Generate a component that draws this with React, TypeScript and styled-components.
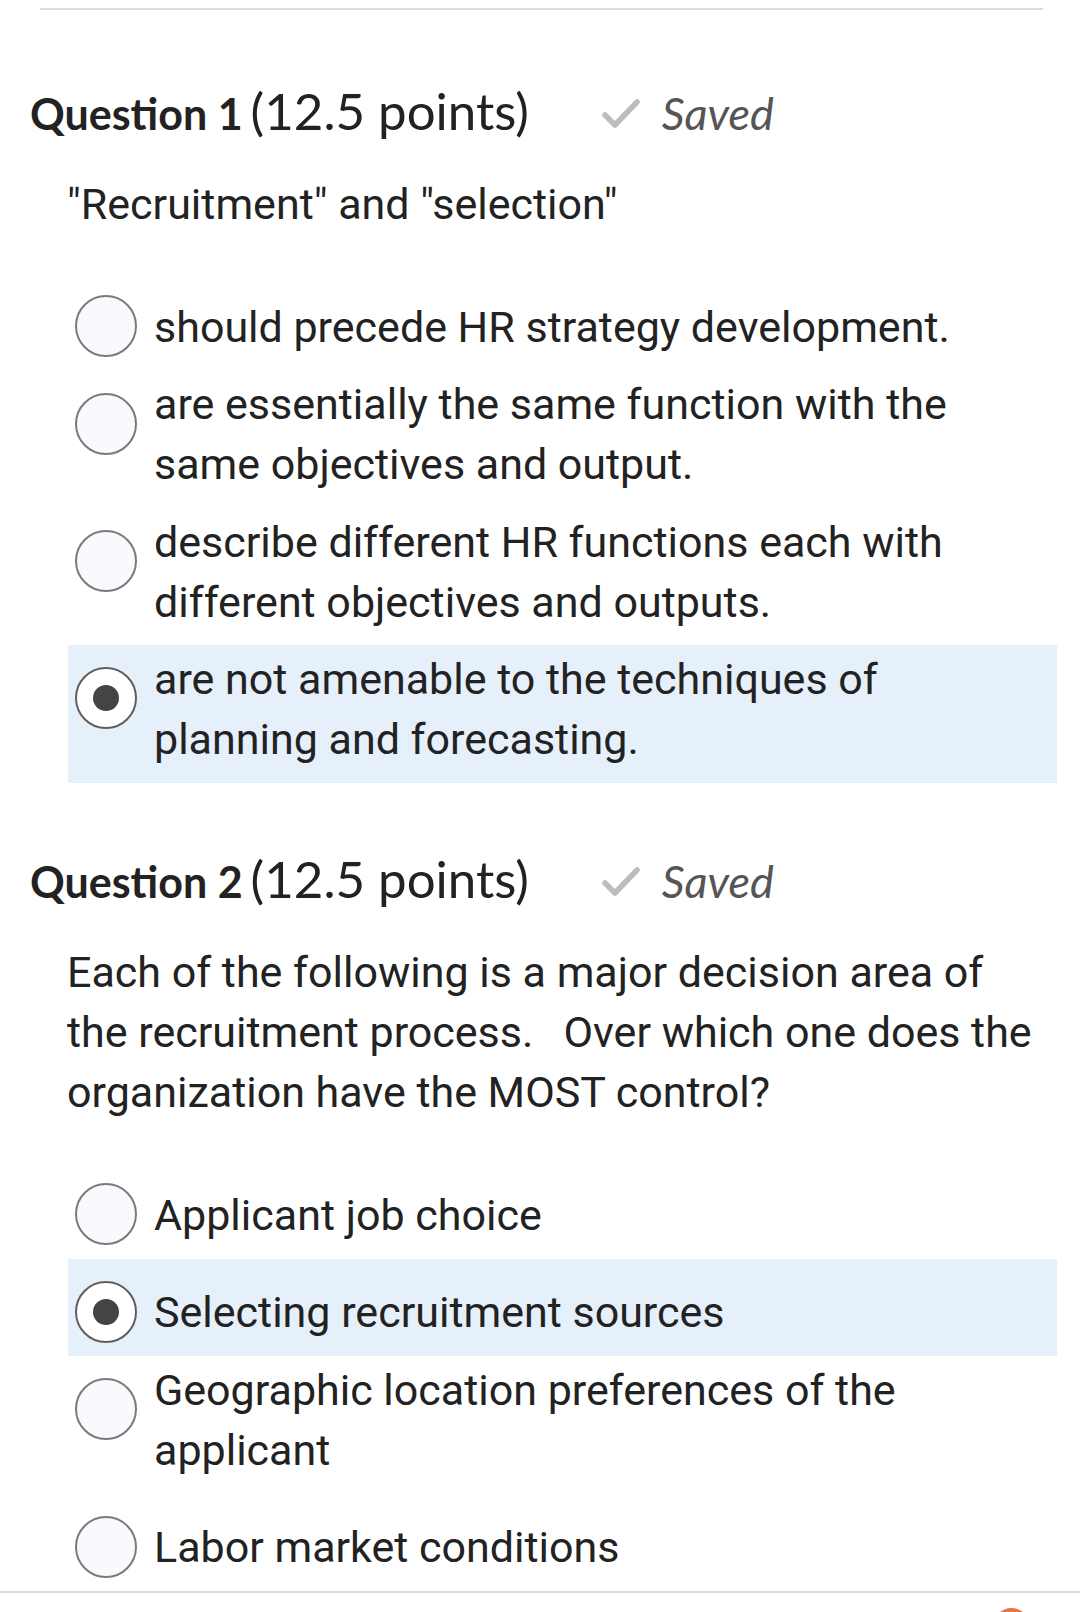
import styled, { createGlobalStyle } from 'styled-components';

const GlobalStyle = createGlobalStyle`
  html, body {
    margin: 0;
    padding: 0;
    background: #ffffff;
  }
  body {
    font-family: Roboto, 'Noto Sans', sans-serif;
    color: #222222;
  }
`;

interface RowProps {
  selected?: boolean;
}

interface TextProps {
  single?: boolean;
}

const Page = styled.main`
  position: relative;
  height: 1612px;
  overflow: hidden;
  padding-top: 8px;
  box-sizing: border-box;
`;

const TopRule = styled.hr`
  margin: 0 37px 5px 40px;
  border: 0;
  height: 2px;
  background: #dcdcdc;
`;

const BottomRule = styled.hr`
  margin: 0;
  border: 0;
  height: 2px;
  background: #dedede;
`;

const Question = styled.section`
  padding: 66px 0 0 30px;
`;

const Heading = styled.h2`
  display: flex;
  align-items: baseline;
  height: 60px;
  margin: 0;
  font-family: Lato, 'Open Sans', sans-serif;
  font-weight: 400;
  line-height: 60px;
  color: #222222;
`;

const Title = styled.span`
  font-size: 43px;
  font-weight: 700;
`;

const Points = styled.span`
  font-size: 51px;
  margin-left: 8px;
`;

const Saved = styled.span`
  display: inline-flex;
  align-items: baseline;
  gap: 21px;
  margin-left: 72px;
  font-size: 45px;
  font-style: italic;
  color: #555555;
`;

const Prompt = styled.p`
  margin: 33px 0 0 37px;
  width: 975px;
  font-size: 43px;
  line-height: 1.4;
`;

const Options = styled.div`
  display: flex;
  flex-direction: column;
  width: 989px;
  margin: 39px 0 0 38px;
`;

const Option = styled.label<RowProps>`
  display: flex;
  align-items: flex-start;
  gap: 17px;
  padding: 0 22px 13.5px 7px;
  background: ${({ selected }) => (selected ? '#e6f0fb' : 'transparent')};
`;

const Radio = styled.span<RowProps>`
  flex: none;
  display: flex;
  align-items: center;
  justify-content: center;
  width: 62px;
  height: 62px;
  margin-top: 22px;
  box-sizing: border-box;
  border-radius: 50%;
  border: ${({ selected }) => (selected ? '2.5px solid #5f5f5f' : '2px solid #7a7a7a')};
  background: ${({ selected }) => (selected ? '#ffffff' : '#f8fafd')};

  &::after {
    content: '';
    display: ${({ selected }) => (selected ? 'block' : 'none')};
    width: 26px;
    height: 26px;
    border-radius: 50%;
    background: #444444;
  }
`;

const OptionText = styled.span<TextProps>`
  flex: 1;
  padding-top: ${({ single }) => (single ? '23.5px' : '3.5px')};
  font-size: 43px;
  line-height: 1.4;
  color: #222222;
`;

const Fab = styled.div`
  position: absolute;
  left: 993px;
  top: 1608px;
  width: 37px;
  height: 37px;
  border-radius: 50%;
  background: #e9743f;
`;

function CheckMark() {
  return (
    <svg width="40" height="32" viewBox="0 0 40 32">
      <path
        d="M4 17 L14 27 L36 4"
        fill="none"
        stroke="#bdbdbd"
        strokeWidth="5.5"
        strokeLinecap="round"
        strokeLinejoin="round"
      />
    </svg>
  );
}

interface Answer {
  text: string;
  single?: boolean;
  selected?: boolean;
}

interface QuestionData {
  number: number;
  prompt: string;
  answers: Answer[];
}

const questions: QuestionData[] = [
  {
    number: 1,
    prompt: '"Recruitment" and "selection"',
    answers: [
      { text: 'should precede HR strategy development.', single: true },
      { text: 'are essentially the same function with the same objectives and output.' },
      { text: 'describe different HR functions each with different objectives and outputs.' },
      {
        text: 'are not amenable to the techniques of planning and forecasting.',
        selected: true,
      },
    ],
  },
  {
    number: 2,
    prompt:
      'Each of the following is a major decision area of the recruitment process.\u00a0\u00a0\u2009Over which one does the organization have the MOST control?',
    answers: [
      { text: 'Applicant job choice', single: true },
      { text: 'Selecting recruitment sources', single: true, selected: true },
      { text: 'Geographic location preferences of the applicant' },
      { text: 'Labor market conditions', single: true },
    ],
  },
];

export default function App() {
  return (
    <>
      <GlobalStyle />
      <Page>
        <TopRule />
        {questions.map((q) => (
          <Question key={q.number}>
            <Heading>
              <Title>Question {q.number}</Title>
              <Points>(12.5 points)</Points>
              <Saved>
                <CheckMark />
                Saved
              </Saved>
            </Heading>
            <Prompt>{q.prompt}</Prompt>
            <Options role="radiogroup">
              {q.answers.map((a) => (
                <Option key={a.text} selected={a.selected}>
                  <Radio selected={a.selected} />
                  <OptionText single={a.single}>{a.text}</OptionText>
                </Option>
              ))}
            </Options>
          </Question>
        ))}
        <BottomRule />
        <Fab />
      </Page>
    </>
  );
}
